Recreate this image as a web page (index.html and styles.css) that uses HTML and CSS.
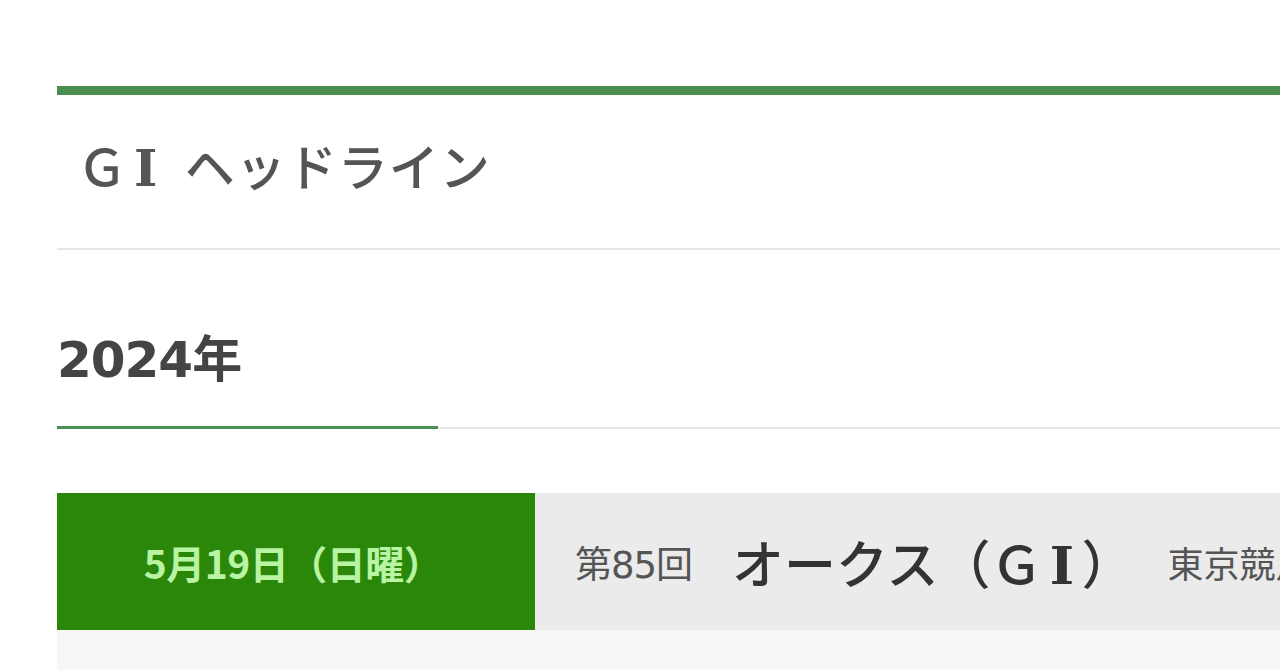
FILE: index.html
```html
<!DOCTYPE html>
<html lang="ja">
<head>
<meta charset="utf-8">
<title>GⅠ ヘッドライン</title>
<link rel="stylesheet" href="styles.css">
</head>
<body>
<div class="page">
  <section class="headline">
    <h2 class="headline-title"><span class="gi">Ｇ<span class="roman">Ⅰ</span></span> ヘッドライン</h2>
  </section>
  <div class="year-block">
    <h3 class="year-title">2024年</h3>
  </div>
  <div class="year-tabs"><span class="tab-active"></span></div>
  <div class="race-row">
    <div class="race-date">5月19日（日曜）</div>
    <div class="race-info">
      <span class="race-no">第85回</span>
      <span class="race-name">オークス（Ｇ<span class="roman">Ⅰ</span>）</span>
      <span class="race-place">東京競馬場</span>
    </div>
  </div>
  <div class="race-detail"></div>
</div>
</body>
</html>
```
FILE: styles.css
```css
html, body {
  margin: 0;
  padding: 0;
  background: #ffffff;
  overflow: hidden;
}
body {
  font-family: "Noto Sans CJK JP", "Noto Sans", sans-serif;
  width: 1280px;
  height: 670px;
}
.page {
  padding-top: 86px;
  padding-left: 57px;
}
.headline {
  border-top: 9px solid #4a8f4f;
  border-bottom: 2px solid #e6e6e6;
  height: 153px;
  display: flex;
  align-items: center;
}
.headline-title {
  margin: 0 0 10px 0;
  padding-left: 20px;
  font-size: 50px;
  font-weight: 500;
  color: #555555;
  line-height: 1;
  letter-spacing: 1px;
}
.gi {
  letter-spacing: 0;
  margin-right: 8px;
}
.roman {
  font-family: "DejaVu Serif", "Liberation Serif", serif;
  font-weight: 700;
  font-size: 1em;
  padding: 0 0.14em;
}
.year-block {
  height: 176px;
  display: flex;
  align-items: center;
}
.year-title {
  margin: 44px 0 0 0;
  font-size: 50px;
  font-weight: 700;
  color: #444444;
  line-height: 1;
  font-family: "DejaVu Sans", "Noto Sans CJK JP", sans-serif;
  letter-spacing: -1px;
}
.year-tabs {
  border-bottom: 2px solid #e6e6e6;
  display: flex;
}
.tab-active {
  display: block;
  width: 381px;
  height: 3px;
  margin-bottom: -2px;
  background: #4a8f4f;
}
.race-row {
  margin-top: 64px;
  height: 137px;
  display: flex;
}
.race-date {
  width: 478px;
  background: #2a870a;
  color: #b8f4a2;
  font-size: 39px;
  font-weight: 700;
  display: flex;
  align-items: center;
  justify-content: center;
  letter-spacing: -0.5px;
  padding-right: 6px;
  box-sizing: border-box;
}
.race-info {
  flex: 1;
  background: #ebebeb;
  display: flex;
  align-items: center;
  padding-left: 40px;
  white-space: nowrap;
  overflow: hidden;
  color: #555555;
}
.race-no {
  font-size: 37px;
  font-family: "DejaVu Sans", "Noto Sans CJK JP", sans-serif;
  letter-spacing: -1px;
}
.race-name {
  font-size: 52px;
  font-weight: 500;
  color: #333333;
  margin-left: 40px;
}
.race-place {
  font-size: 36px;
  margin-left: 34px;
}
.race-detail {
  height: 60px;
  background: #f7f7f7;
}
```
